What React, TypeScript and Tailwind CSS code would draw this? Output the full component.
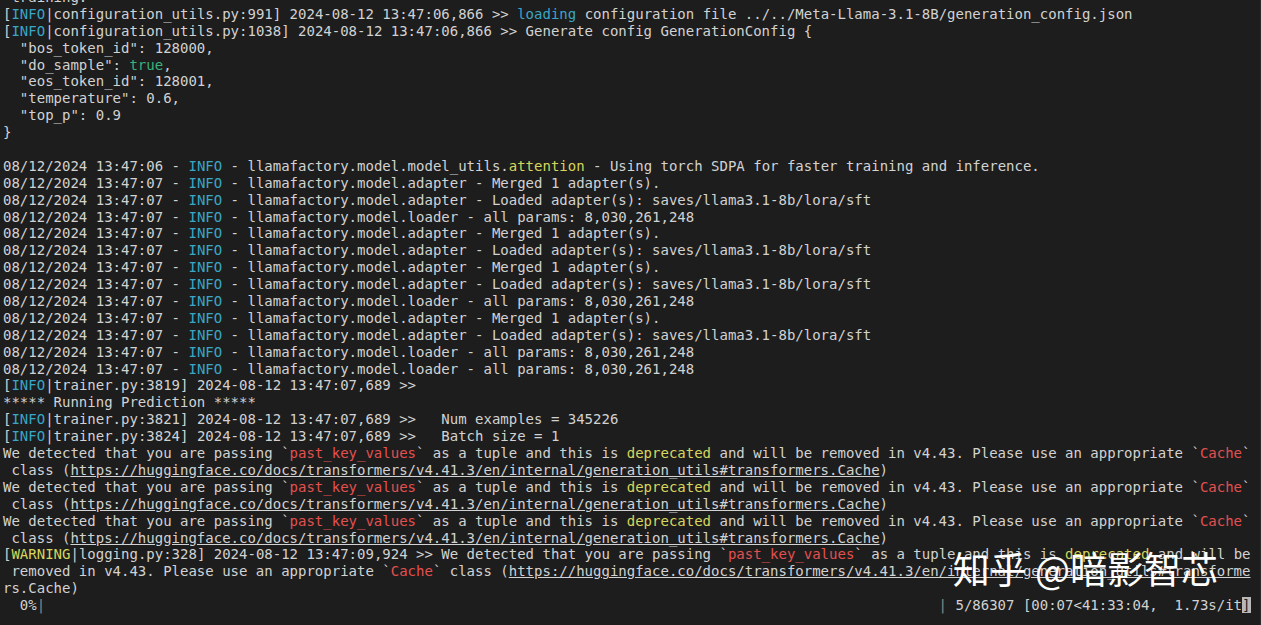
const CYAN = "text-[#3aa6c5]";
const RED = "text-[#e2504f]";
const YEL = "text-[#d6d65c]";
const GRN = "text-[#3cb07c]";
const DIM = "text-[#8a8a8a]";

const URL =
  "https://huggingface.co/docs/transformers/v4.41.3/en/internal/generation_utils#transformers.Cache";

const Line = ({ children }: { children?: React.ReactNode }) => (
  <div className="h-[16.9px] whitespace-pre">{children}</div>
);

const Tag = ({ text = "INFO", color = CYAN }: { text?: string; color?: string }) => (
  <>
    [<span className={color}>{text}</span>|
  </>
);

const Factory = ({ msg, t = "07" }: { msg: React.ReactNode; t?: string }) => (
  <Line>
    08/12/2024 13:47:{t} - <span className={CYAN}>INFO</span> - llamafactory.model.{msg}
  </Line>
);

const merged = "adapter - Merged 1 adapter(s).";
const loaded = "adapter - Loaded adapter(s): saves/llama3.1-8b/lora/sft";
const params = "loader - all params: 8,030,261,248";

const Deprecated = () => (
  <>
    <Line>
      We detected that you are passing `<span className={RED}>past_key_values</span>` as a tuple and
      this is <span className={YEL}>deprecated</span> and will be removed in v4.43. Please use an
      appropriate `<span className={RED}>Cache</span>`
    </Line>
    <Line>
      {" class ("}
      <span className="underline">{URL}</span>)
    </Line>
  </>
);

export default function App() {
  return (
    <div className="relative h-[625px] w-[1261px] overflow-hidden bg-[#1d1d1d] border-r border-[#2c2c2c] font-['DejaVu_Sans_Mono','Liberation_Mono',monospace] text-[14px] text-[#d2d2d2]">
      {/* terminal scrollback */}
      <div className="-mt-[13px] pl-[3px] flex flex-col">
        <Line> training.</Line>
        <Line>
          <Tag />
          configuration_utils.py:991] 2024-08-12 13:47:06,866 &gt;&gt;{" "}
          <span className={CYAN}>loading</span> configuration file
          ../../Meta-Llama-3.1-8B/generation_config.json
        </Line>
        <Line>
          <Tag />
          configuration_utils.py:1038] 2024-08-12 13:47:06,866 &gt;&gt; Generate config
          GenerationConfig {"{"}
        </Line>
        <Line>{'  "bos_token_id": 128000,'}</Line>
        <Line>
          {'  "do_sample": '}
          <span className={GRN}>true</span>,
        </Line>
        <Line>{'  "eos_token_id": 128001,'}</Line>
        <Line>{'  "temperature": 0.6,'}</Line>
        <Line>{'  "top_p": 0.9'}</Line>
        <Line>{"}"}</Line>
        <Line />
        <Factory
          t="06"
          msg={
            <>
              model_utils.<span className={YEL}>attention</span> - Using torch SDPA for faster
              training and inference.
            </>
          }
        />
        <Factory msg={merged} />
        <Factory msg={loaded} />
        <Factory msg={params} />
        <Factory msg={merged} />
        <Factory msg={loaded} />
        <Factory msg={merged} />
        <Factory msg={loaded} />
        <Factory msg={params} />
        <Factory msg={merged} />
        <Factory msg={loaded} />
        <Factory msg={params} />
        <Factory msg={params} />
        <Line>
          <Tag />
          trainer.py:3819] 2024-08-12 13:47:07,689 &gt;&gt;
        </Line>
        <Line>***** Running Prediction *****</Line>
        <Line>
          <Tag />
          {"trainer.py:3821] 2024-08-12 13:47:07,689 >>   Num examples = 345226"}
        </Line>
        <Line>
          <Tag />
          {"trainer.py:3824] 2024-08-12 13:47:07,689 >>   Batch size = 1"}
        </Line>
        <Deprecated />
        <Deprecated />
        <Deprecated />
        <Line>
          <Tag text="WARNING" color={YEL} />
          logging.py:328] 2024-08-12 13:47:09,924 &gt;&gt; We detected that you are passing `
          <span className={RED}>past_key_values</span>` as a tuple and this is{" "}
          <span className={YEL}>deprecated</span> and will be
        </Line>
        <Line>
          {" removed in v4.43. Please use an appropriate `"}
          <span className={RED}>Cache</span>
          {"` class ("}
          <span className="underline">{URL.slice(0, 88)}</span>
        </Line>
        <Line>{URL.slice(88)})</Line>
        <Line>
          {"  0%"}
          <span className={DIM}>|</span>
          {" ".repeat(106)}
          <span className={DIM}>|</span>
          {" 5/86307 [00:07<41:33:04,  1.73s/it"}
          <span className="bg-[#b8b8b8] text-[#1d1d1d]">]</span>
        </Line>
      </div>

      {/* watermark */}
      <div className="absolute right-[42px] top-[550px] font-['Noto_Sans_CJK_SC','Noto_Sans',sans-serif] text-[37px] leading-none text-white">
        知乎 @暗影智芯
      </div>
    </div>
  );
}
